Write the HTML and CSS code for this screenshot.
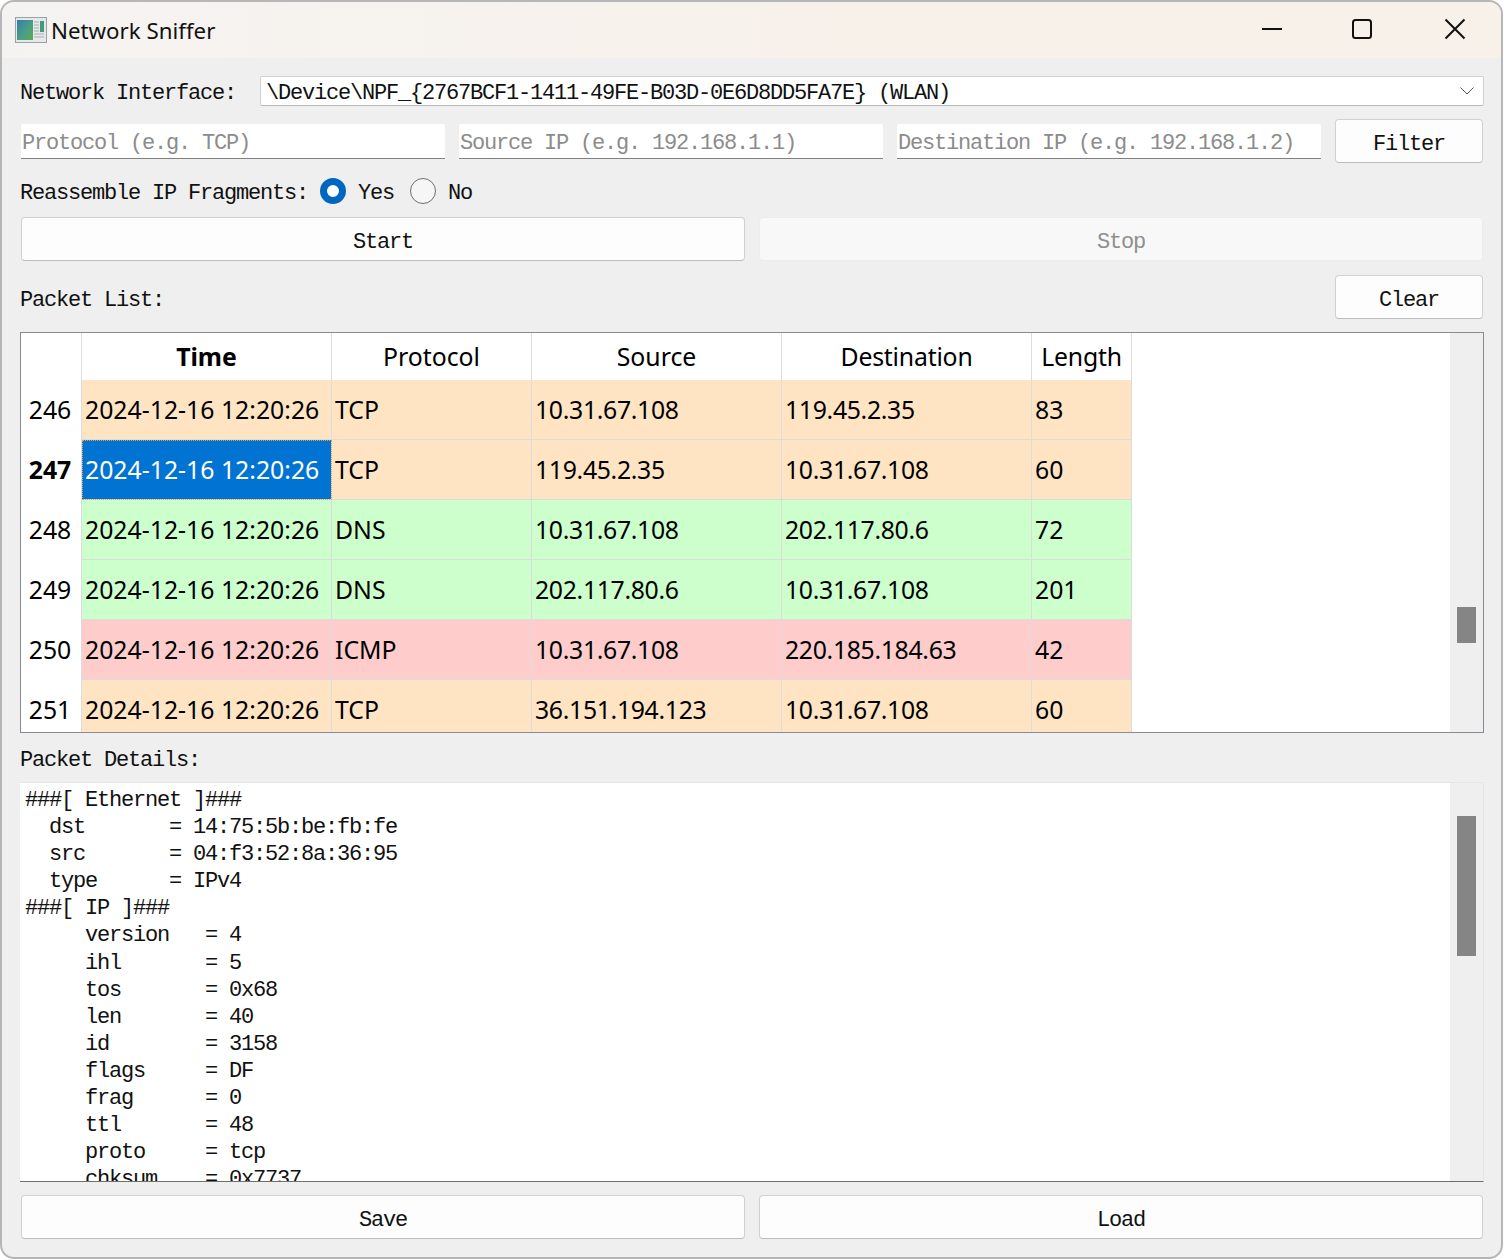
FILE: index.html
```html
<!DOCTYPE html>
<html lang="en">
<head>
<meta charset="utf-8">
<title>Network Sniffer</title>
<link rel="stylesheet" href="styles.css">
</head>
<body>
<div class="window">
  <header class="titlebar">
    <svg class="app-icon" width="32" height="26" viewBox="0 0 32 26">
      <defs><linearGradient id="g" x1="0" y1="0" x2="1" y2="1"><stop offset="0" stop-color="#2f7fa8"/><stop offset=".55" stop-color="#4a9f86"/><stop offset="1" stop-color="#5fa94f"/></linearGradient></defs>
      <rect x=".5" y=".5" width="31" height="25" fill="#e6e8ea" stroke="#9aa0a6"/>
      <rect x="2" y="3" width="16" height="20" fill="url(#g)"/>
      <rect x="25" y="4" width="4" height="11" fill="#3f9c78"/>
      <path d="M19 5h5M19 8h5M19 11h5M19 14h5M19 17h10M19 20h10" stroke="#a9adb2" fill="none"/>
    </svg>
    <span class="title">Network Sniffer</span>
    <div class="controls">
      <svg width="20" height="20" viewBox="0 0 20 20"><path d="M0 10h20" stroke="#111" stroke-width="2" fill="none"/></svg>
      <svg width="22" height="22" viewBox="0 0 22 22"><rect x="2" y="2" width="18" height="18" rx="2.5" stroke="#111" stroke-width="2" fill="none"/></svg>
      <svg width="22" height="22" viewBox="0 0 22 22"><path d="M1.500 1.500L20.500 20.500M20.500 1.500L1.500 20.500" stroke="#111" stroke-width="2" fill="none"/></svg>
    </div>
  </header>

  <main class="content">
    <div class="row row-iface">
      <span class="label iface-label">Network Interface:</span>
      <div class="combo">
        <span>\Device\NPF_{2767BCF1-1411-49FE-B03D-0E6D8DD5FA7E} (WLAN)</span>
        <svg width="14" height="8" viewBox="0 0 14 8"><path d="M.5 .5L7 7L13.500 .5" stroke="#555" fill="none"/></svg>
      </div>
    </div>

    <div class="row row-filter">
      <input class="field" placeholder="Protocol (e.g. TCP)">
      <input class="field" placeholder="Source IP (e.g. 192.168.1.1)">
      <input class="field" placeholder="Destination IP (e.g. 192.168.1.2)">
      <button class="btn btn-small">Filter</button>
    </div>

    <div class="row row-radio">
      <span class="label">Reassemble IP Fragments:</span>
      <span class="radio radio-on"></span><span class="label radio-text">Yes</span>
      <span class="radio"></span><span class="label radio-text">No</span>
    </div>

    <div class="row row-buttons">
      <button class="btn">Start</button>
      <button class="btn" disabled>Stop</button>
    </div>

    <div class="row row-list">
      <span class="label">Packet List:</span>
      <button class="btn btn-small">Clear</button>
    </div>

    <section class="pane table-pane">
      <div class="viewport table-view">
        <table class="packets">
          <thead>
            <tr><th class="corner"></th><th class="current">Time</th><th>Protocol</th><th>Source</th><th>Destination</th><th>Length</th></tr>
          </thead>
          <tbody>
            <tr class="tcp"><th>246</th><td>2024-12-16 12:20:26</td><td>TCP</td><td>10.31.67.108</td><td>119.45.2.35</td><td>83</td></tr>
            <tr class="tcp"><th class="current">247</th><td class="selected">2024-12-16 12:20:26</td><td>TCP</td><td>119.45.2.35</td><td>10.31.67.108</td><td>60</td></tr>
            <tr class="dns"><th>248</th><td>2024-12-16 12:20:26</td><td>DNS</td><td>10.31.67.108</td><td>202.117.80.6</td><td>72</td></tr>
            <tr class="dns"><th>249</th><td>2024-12-16 12:20:26</td><td>DNS</td><td>202.117.80.6</td><td>10.31.67.108</td><td>201</td></tr>
            <tr class="icmp"><th>250</th><td>2024-12-16 12:20:26</td><td>ICMP</td><td>10.31.67.108</td><td>220.185.184.63</td><td>42</td></tr>
            <tr class="tcp"><th>251</th><td>2024-12-16 12:20:26</td><td>TCP</td><td>36.151.194.123</td><td>10.31.67.108</td><td>60</td></tr>
          </tbody>
        </table>
      </div>
      <div class="scrollbar table-scroll"><div class="thumb"></div></div>
    </section>

    <div class="row row-details"><span class="label">Packet Details:</span></div>

    <section class="pane details-pane">
      <div class="viewport">
<pre class="dump">###[ Ethernet ]###
  dst       = 14:75:5b:be:fb:fe
  src       = 04:f3:52:8a:36:95
  type      = IPv4
###[ IP ]###
     version   = 4
     ihl       = 5
     tos       = 0x68
     len       = 40
     id        = 3158
     flags     = DF
     frag      = 0
     ttl       = 48
     proto     = tcp
     chksum    = 0x7737</pre>
      </div>
      <div class="scrollbar details-scroll"><div class="thumb"></div></div>
    </section>

    <div class="row row-buttons row-bottom">
      <button class="btn">Save</button>
      <button class="btn">Load</button>
    </div>
  </main>
</div>
</body>
</html>
```
FILE: styles.css
```css
* { box-sizing: border-box; }
html, body { margin: 0; padding: 0; background: #fff; }
body { padding: 0 1px 1px 0; height: 1260px; overflow: hidden; }

.window {
  height: 1259px;
  border: 2px solid #b6b6b6;
  border-radius: 14px;
  background: #efefef;
  overflow: hidden;
  display: flex;
  flex-direction: column;
  font-family: "Liberation Mono", monospace;
  font-size: 22px;
  letter-spacing: -1.2px;
  color: #111;
}

.titlebar {
  height: 56px;
  flex: none;
  display: flex;
  align-items: center;
  padding-left: 13px;
  background: linear-gradient(90deg, #f5f3f1, #f8f1ea 60%);
  letter-spacing: normal;
}
.app-icon { flex: none; margin-top: -1px; }
.title { font-family: "Noto Sans", sans-serif; font-size: 22.300px; margin-left: 4px; color: #111; }
.controls { margin-left: auto; display: flex; align-items: center; padding-right: 35px; margin-top: -3px; }
.controls svg:nth-child(1) { margin-right: 69px; }
.controls svg:nth-child(2) { margin-right: 71px; }

.content {
  flex: 1;
  min-height: 0;
  display: flex;
  flex-direction: column;
  padding: 18px 17px 0 18px;
}

.row { display: flex; align-items: center; flex: none; }
.label { white-space: pre; padding-top: 4px; }

.row-iface { height: 30px; }
.iface-label { width: 240px; flex: none; }
.combo {
  flex: 1;
  height: 30px;
  background: #fff;
  border: 1px solid #d2d2d2;
  border-bottom-color: #b8b8b8;
  border-radius: 2px;
  display: flex;
  align-items: center;
  justify-content: space-between;
  padding: 0 9px 0 5px;
}
.combo span { padding-top: 4px; }

.row-filter { height: 44px; margin-top: 13px; padding: 0 1px; }
.field {
  width: 424px;
  height: 35px;
  flex: none;
  margin-right: 14px;
  border: 0;
  border-bottom: 1px solid #808080;
  border-radius: 2px 2px 0 0;
  background: #fff;
  padding: 5px 1px 0;
  font: inherit;
  letter-spacing: inherit;
  outline: 0;
}
.field::placeholder { color: #8c8c8c; opacity: 1; }

.btn {
  flex: 1;
  height: 44px;
  background: #fdfdfd;
  border: 1px solid #d0d0d0;
  border-bottom-color: #bcbcbc;
  border-radius: 4px;
  font: inherit;
  letter-spacing: inherit;
  color: #111;
  padding: 6px 0 0;
}
.btn:disabled { background: #f8f8f8; border-color: #ececec; color: #8f8f8f; }
.btn-small { flex: none; width: 148px; }

.row-radio { height: 28px; margin-top: 14px; }
.radio {
  width: 26px;
  height: 26px;
  flex: none;
  border-radius: 50%;
  border: 1.500px solid #6f6f6f;
  background: #f6f6f6;
}
.row-radio .label:first-child { margin-right: 12px; }
.radio-on { border: 7.500px solid #0067c0; background: #fff; }
.radio-text { margin: 0 16px 0 12px; }

.row-buttons { gap: 14px; padding: 0 1px; margin-top: 12px; }
.row-list { justify-content: space-between; padding-right: 1px; margin-top: 14px; }
.row-list .label { padding-top: 6px; }
.row-details { height: 28px; margin-top: 12px; }
.row-details .label { padding-top: 2px; }
.row-bottom { margin-top: 13px; }

.pane { display: flex; flex: none; background: #fff; }
.viewport { flex: 1; min-width: 0; overflow: hidden; }

.table-pane { height: 401px; margin-top: 13px; border: 1px solid #8a8a92; }
.packets {
  border-collapse: separate;
  border-spacing: 0;
  table-layout: fixed;
  width: 1111px;
  font-family: "Noto Sans", sans-serif;
  font-size: 24.800px;
  letter-spacing: normal;
  color: #000;
}
.packets th, .packets td { padding: 0 0 2px; font-weight: 400; white-space: nowrap; }
.packets thead th {
  height: 47px;
  border-right: 1px solid #dcdcdc;
  text-align: center;
}
.packets thead th:nth-child(1) { width: 61px; }
.packets thead th:nth-child(2) { width: 250px; }
.packets thead th:nth-child(3) { width: 200px; }
.packets thead th:nth-child(4) { width: 250px; }
.packets thead th:nth-child(5) { width: 250px; letter-spacing: -0.200px; }
.packets thead th:nth-child(6) { width: 100px; letter-spacing: -0.200px; }
.packets tbody tr { height: 60px; }
.packets tbody th { text-align: center; padding-right: 2px; border-right: 1px solid #dcdcdc; background: #fff; }
.packets td {
  padding-left: 3px;
  border-right: 1px solid #dcdcdc;
  border-bottom: 1px solid #dcdcdc;
}
.packets td:nth-of-type(3), .packets td:nth-of-type(4) { letter-spacing: -0.330px; }
.packets .current { font-weight: 700; }
.tcp td { background: #ffe4c4; }
.dns td { background: #ccffcc; }
.icmp td { background: #ffcccc; }
.packets td.selected {
  background: #0173d3;
  color: #fff;
  outline: 1px dotted #e8a050;
  outline-offset: -1px;
}

.scrollbar { width: 33px; flex: none; background: #efefef; display: flex; justify-content: center; }
.thumb { width: 19px; background: #858585; }
.table-scroll .thumb { height: 36px; margin-top: 274px; }
.details-scroll .thumb { height: 140px; margin-top: 33px; }

.details-pane {
  height: 400px;
  margin-top: 9px;
  border-top: 1px solid #e6e6e6;
  border-right: 1px solid #e6e6e6;
  border-bottom: 1px solid #707070;
}
.dump {
  margin: 0;
  padding: 4px 0 0 5px;
  font: inherit;
  letter-spacing: inherit;
  line-height: 27.100px;
  color: #111;
}
```
